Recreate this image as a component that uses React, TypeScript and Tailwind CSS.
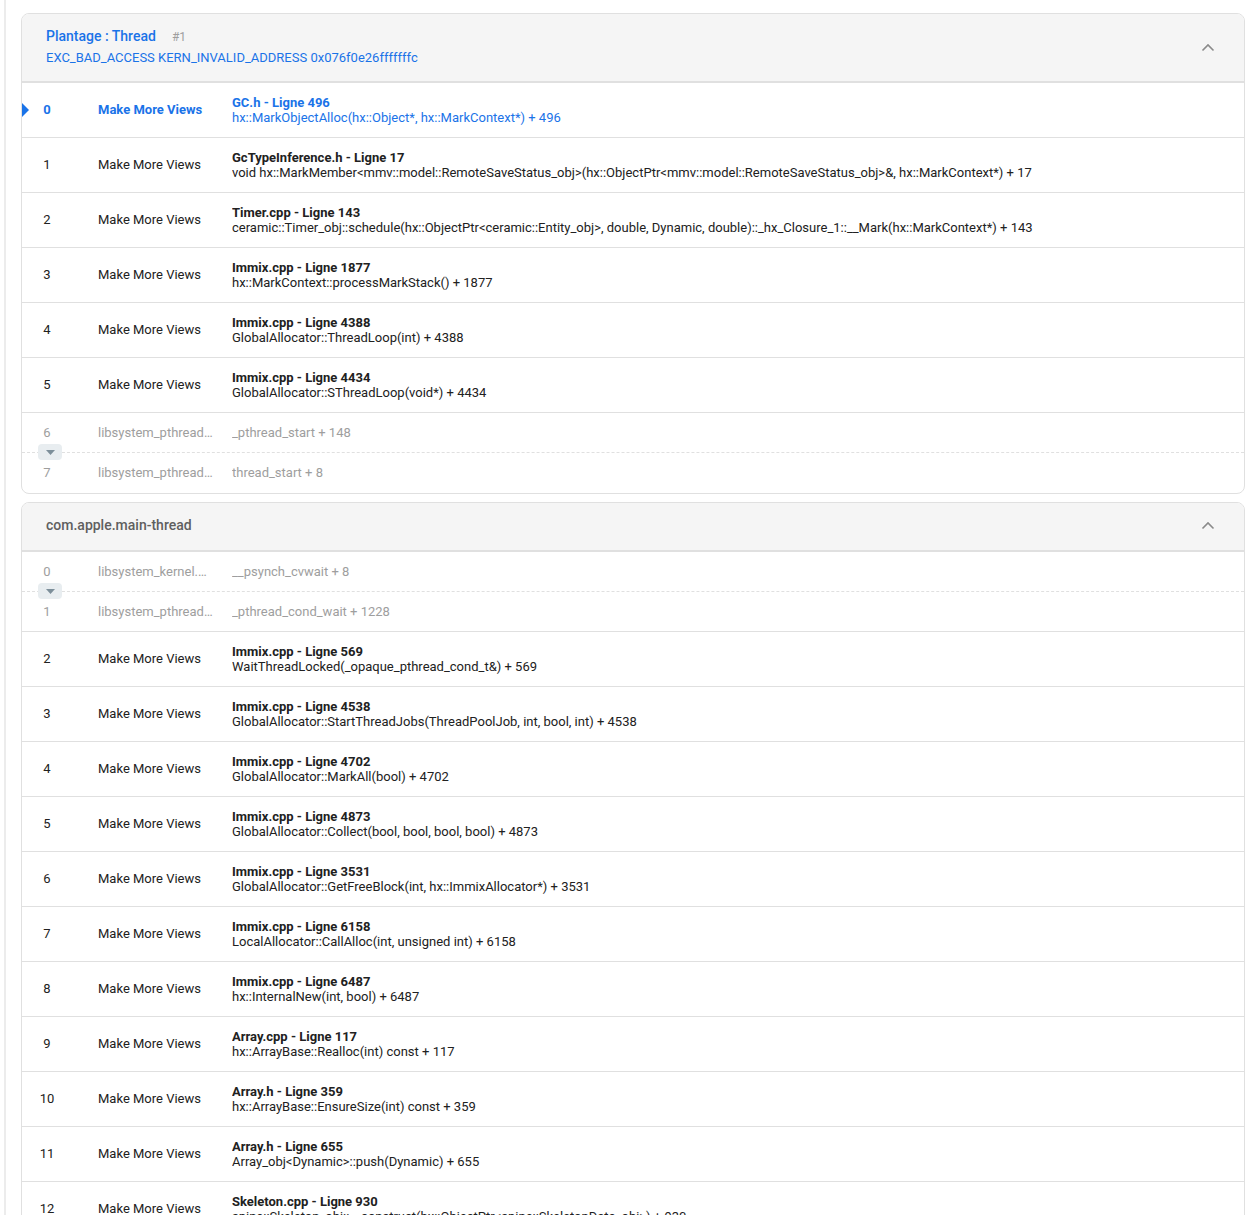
import React from "react";

type Frame = {
  idx: number;
  module: string;
  title?: string;
  sub: string;
  collapsed?: boolean;
  active?: boolean;
};

const thread1: Frame[] = [
  { idx: 0, module: "Make More Views", title: "GC.h - Ligne 496", sub: "hx::MarkObjectAlloc(hx::Object*, hx::MarkContext*) + 496", active: true },
  { idx: 1, module: "Make More Views", title: "GcTypeInference.h - Ligne 17", sub: "void hx::MarkMember<mmv::model::RemoteSaveStatus_obj>(hx::ObjectPtr<mmv::model::RemoteSaveStatus_obj>&, hx::MarkContext*) + 17" },
  { idx: 2, module: "Make More Views", title: "Timer.cpp - Ligne 143", sub: "ceramic::Timer_obj::schedule(hx::ObjectPtr<ceramic::Entity_obj>, double, Dynamic, double)::_hx_Closure_1::__Mark(hx::MarkContext*) + 143" },
  { idx: 3, module: "Make More Views", title: "Immix.cpp - Ligne 1877", sub: "hx::MarkContext::processMarkStack() + 1877" },
  { idx: 4, module: "Make More Views", title: "Immix.cpp - Ligne 4388", sub: "GlobalAllocator::ThreadLoop(int) + 4388" },
  { idx: 5, module: "Make More Views", title: "Immix.cpp - Ligne 4434", sub: "GlobalAllocator::SThreadLoop(void*) + 4434" },
  { idx: 6, module: "libsystem_pthread.dylib", sub: "_pthread_start + 148", collapsed: true },
  { idx: 7, module: "libsystem_pthread.dylib", sub: "thread_start + 8", collapsed: true },
];

const thread2: Frame[] = [
  { idx: 0, module: "libsystem_kernel.dylib", sub: "__psynch_cvwait + 8", collapsed: true },
  { idx: 1, module: "libsystem_pthread.dylib", sub: "_pthread_cond_wait + 1228", collapsed: true },
  { idx: 2, module: "Make More Views", title: "Immix.cpp - Ligne 569", sub: "WaitThreadLocked(_opaque_pthread_cond_t&) + 569" },
  { idx: 3, module: "Make More Views", title: "Immix.cpp - Ligne 4538", sub: "GlobalAllocator::StartThreadJobs(ThreadPoolJob, int, bool, int) + 4538" },
  { idx: 4, module: "Make More Views", title: "Immix.cpp - Ligne 4702", sub: "GlobalAllocator::MarkAll(bool) + 4702" },
  { idx: 5, module: "Make More Views", title: "Immix.cpp - Ligne 4873", sub: "GlobalAllocator::Collect(bool, bool, bool, bool) + 4873" },
  { idx: 6, module: "Make More Views", title: "Immix.cpp - Ligne 3531", sub: "GlobalAllocator::GetFreeBlock(int, hx::ImmixAllocator*) + 3531" },
  { idx: 7, module: "Make More Views", title: "Immix.cpp - Ligne 6158", sub: "LocalAllocator::CallAlloc(int, unsigned int) + 6158" },
  { idx: 8, module: "Make More Views", title: "Immix.cpp - Ligne 6487", sub: "hx::InternalNew(int, bool) + 6487" },
  { idx: 9, module: "Make More Views", title: "Array.cpp - Ligne 117", sub: "hx::ArrayBase::Realloc(int) const + 117" },
  { idx: 10, module: "Make More Views", title: "Array.h - Ligne 359", sub: "hx::ArrayBase::EnsureSize(int) const + 359" },
  { idx: 11, module: "Make More Views", title: "Array.h - Ligne 655", sub: "Array_obj<Dynamic>::push(Dynamic) + 655" },
  { idx: 12, module: "Make More Views", title: "Skeleton.cpp - Ligne 930", sub: "spine::Skeleton_obj::__construct(hx::ObjectPtr<spine::SkeletonData_obj>) + 930" },
  { idx: 13, module: "Make More Views", title: "Skeleton.cpp - Ligne 245", sub: "spine::Skeleton_obj::updateCache() + 245" },
];

function ChevronUp() {
  return (
    <svg width="14" height="9" viewBox="0 0 14 9" fill="none">
      <polyline points="1.5,7.5 7,2 12.5,7.5" stroke="#8a8a8a" strokeWidth="1.6" fill="none" />
    </svg>
  );
}

function ExpandButton() {
  return (
    <div className="absolute left-[16px] top-[-9px] z-10 flex h-[16px] w-[24px] items-center justify-center rounded-[4px] bg-[#e8edf0]">
      <svg width="9" height="5" viewBox="0 0 9 5">
        <polygon points="0,0 9,0 4.5,5" fill="#7d8f9a" />
      </svg>
    </div>
  );
}

function Row({ f, last, nextCollapsed }: { f: Frame; last: boolean; nextCollapsed: boolean }) {
  if (f.collapsed) {
    const border = last
      ? ""
      : nextCollapsed
      ? "border-b border-dashed border-[#e0e0e0]"
      : "border-b border-[#e0e0e0]";
    return (
      <div className={`relative flex h-[40px] items-center text-[13px] text-[#9e9e9e] ${border}`}>
        <div className="w-[50px] shrink-0 text-center">{f.idx}</div>
        <div className="w-[160px] shrink-0 truncate pl-[26px] pr-[19px]">{f.module}</div>
        <div className="min-w-0 flex-1 truncate">{f.sub}</div>
      </div>
    );
  }
  const color = f.active ? "text-[#1a73e8]" : "text-[#212121]";
  return (
    <div className={`relative flex h-[55px] items-center text-[13px] ${color} ${last ? "" : "border-b border-[#e0e0e0]"}`}>
      {f.active && (
        <svg className="absolute left-0 top-[20px]" width="7" height="14" viewBox="0 0 7 14">
          <polygon points="0,0 7,7 0,14" fill="#1a73e8" />
        </svg>
      )}
      <div className={`w-[50px] shrink-0 text-center ${f.active ? "font-bold" : ""}`}>{f.idx}</div>
      <div className={`w-[160px] shrink-0 truncate pl-[26px] pr-[14px] ${f.active ? "font-bold" : ""}`}>{f.module}</div>
      <div className="min-w-0 flex-1 pr-4 leading-[15px]">
        <div className="truncate font-bold">{f.title}</div>
        <div className="truncate">{f.sub}</div>
      </div>
    </div>
  );
}

function Rows({ frames }: { frames: Frame[] }) {
  return (
    <div>
      {frames.map((f, i) => {
        const prevCollapsed = i > 0 && frames[i - 1].collapsed && f.collapsed;
        const nextCollapsed = i < frames.length - 1 && !!frames[i + 1].collapsed;
        return (
          <div key={i} className="relative">
            {prevCollapsed && <ExpandButton />}
            <Row f={f} last={i === frames.length - 1} nextCollapsed={nextCollapsed} />
          </div>
        );
      })}
    </div>
  );
}

export default function App() {
  return (
    <div className="min-h-screen bg-white pl-[4px] font-['Roboto','Liberation_Sans',sans-serif]">
      <div className="flex min-h-screen flex-col gap-[8px] border-l-2 border-[#ececec] pl-[15px] pr-[14px] pt-[13px]">
        <div className="overflow-hidden rounded-[8px] border border-[#e0e0e0]">
          <div className="flex h-[69px] items-center justify-between border-b-2 border-[#e0e0e0] bg-[#f5f5f5] pl-[24px] pr-[29px]">
            <div className="flex flex-col self-start pt-[12px]">
              <div className="flex items-baseline">
                <span className="text-[14px] font-medium leading-[20px] text-[#1a73e8]">Plantage : Thread</span>
                <span className="ml-[16px] text-[12px] text-[#9e9e9e]">#1</span>
              </div>
              <div className="mt-[4px] text-[13px] leading-[16px] text-[#1a73e8]">
                EXC_BAD_ACCESS KERN_INVALID_ADDRESS 0x076f0e26fffffffc
              </div>
            </div>
            <ChevronUp />
          </div>
          <Rows frames={thread1} />
        </div>

        <div className="overflow-hidden rounded-[8px] border border-[#e0e0e0]">
          <div className="flex h-[49px] items-center justify-between border-b-2 border-[#e0e0e0] bg-[#f5f5f5] pb-[3px] pl-[24px] pr-[29px]">
            <span className="text-[14px] font-medium text-[#5f5f5f]">com.apple.main-thread</span>
            <ChevronUp />
          </div>
          <Rows frames={thread2} />
        </div>
      </div>
    </div>
  );
}
